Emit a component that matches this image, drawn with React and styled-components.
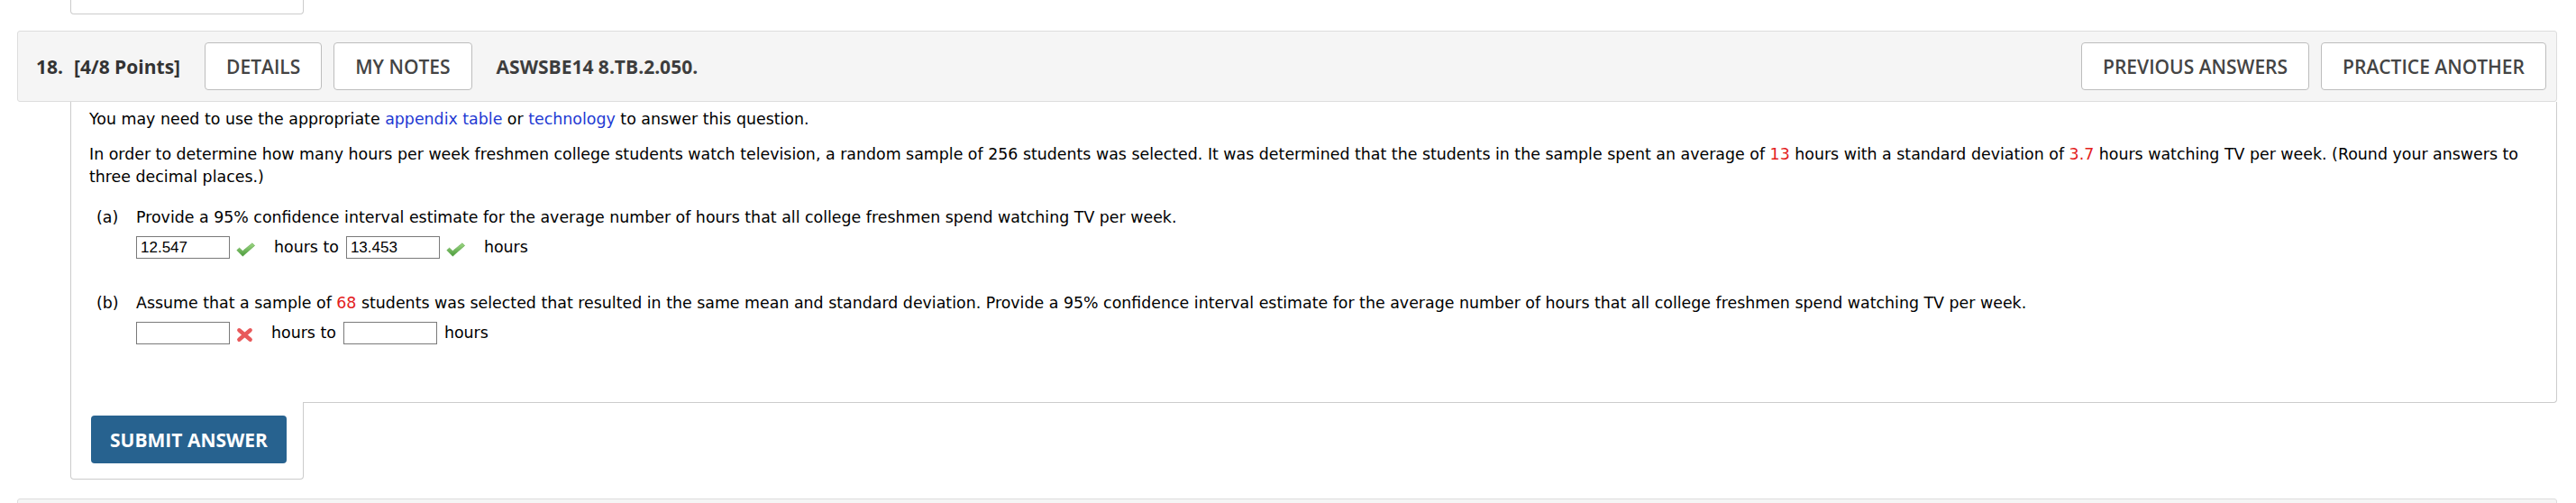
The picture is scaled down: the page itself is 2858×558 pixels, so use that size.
import React from "react";
import styled, { createGlobalStyle } from "styled-components";

const GlobalStyle = createGlobalStyle`
  html, body { margin: 0; padding: 0; background: #fff; }
  body { font-family: Verdana, "DejaVu Sans", sans-serif; color: #000; }
`;

const Page = styled.div`
  width: 2858px;
  height: 558px;
  overflow: hidden;
  box-sizing: border-box;
  padding: 0 21px 0 19px;
`;

const Tab = styled.div`
  margin-left: 59px;
  width: 259px;
  height: ${(p) => p.$h}px;
  margin-top: ${(p) => p.$mt || 0}px;
  box-sizing: border-box;
  background: #fff;
  border: 1px solid #ccc;
  border-top: none;
  border-radius: 0 0 4px 4px;
  padding: 15px 0 0 22px;
  position: relative;
`;

const Header = styled.div`
  display: flex;
  align-items: center;
  box-sizing: border-box;
  height: 79px;
  margin-top: ${(p) => p.$mt}px;
  padding: 0 11px 0 20px;
  background: #f5f5f5;
  border: 1px solid #ddd;
  border-radius: 3px;
  font-family: "Open Sans", sans-serif;
  font-size: 21px;
  color: #333;
`;

const QNum = styled.span`
  font-weight: 700;
  margin-right: 12px;
`;

const Points = styled.span`
  font-weight: 700;
  margin-right: 27px;
`;

const Code = styled.span`
  font-weight: 700;
  color: #3d3d3d;
  margin-left: 27px;
`;

const ButtonGroup = styled.div`
  display: flex;
  gap: 13px;
  margin-left: ${(p) => (p.$push ? "auto" : "0")};
`;

const HeaderButton = styled.button`
  height: 53px;
  padding: 0 23px;
  box-sizing: border-box;
  background: #fff;
  border: 1px solid #bdbdbd;
  border-radius: 4px;
  font-family: "Open Sans", sans-serif;
  font-weight: 600;
  font-size: 21px;
  color: #444;
  cursor: pointer;
`;

const Panel = styled.div`
  margin-left: 59px;
  height: 334px;
  box-sizing: border-box;
  border: 1px solid #ccc;
  border-top: none;
  border-radius: 0 0 4px 0;
  padding: 7px 20px 0 20px;
  font-size: 17.4px;
  line-height: 25px;
`;

const Para = styled.p`
  margin: ${(p) => p.$mt || 0}px 0 0 0;
`;

const Link = styled.a`
  color: #2239d3;
  text-decoration: none;
`;

const Red = styled.span`
  color: #e3211c;
`;

const Part = styled.div`
  display: grid;
  grid-template-columns: 44px 1fr;
  padding-left: 8px;
  margin-top: ${(p) => p.$mt}px;
`;

const PartLabel = styled.span``;

const PartBody = styled.div`
  display: flex;
  flex-direction: column;
`;

const AnswerRow = styled.div`
  display: flex;
  align-items: center;
  height: 25px;
  margin-top: 8px;
`;

const AnswerInput = styled.input`
  width: 104px;
  height: 25px;
  box-sizing: border-box;
  border: 1px solid #7a7a7a;
  border-radius: 0;
  padding: 0 4px;
  margin: 0;
  font-family: Arial, "Liberation Sans", sans-serif;
  font-size: 17px;
  color: #000;
  background: #fff;
  outline: none;
`;

const Mark = styled.span`
  display: inline-flex;
  width: ${(p) => p.$w}px;
  margin: 4px 20px 0 7px;
`;

const RowText = styled.span`
  margin-left: ${(p) => p.$ml || 0}px;
  margin-right: ${(p) => p.$mr || 0}px;
  white-space: nowrap;
`;

const SubmitButton = styled.button`
  width: 217px;
  height: 53px;
  background: #27628f;
  color: #fff;
  border: none;
  border-radius: 4px;
  font-family: "Open Sans", sans-serif;
  font-weight: 700;
  font-size: 21px;
  cursor: pointer;
`;

const CheckIcon = () => (
  <svg width="21" height="16" viewBox="0 0 21 16">
    <defs>
      <linearGradient id="chk" x1="0" y1="0" x2="0" y2="1">
        <stop offset="0" stopColor="#9fd884" />
        <stop offset="1" stopColor="#4b9a3c" />
      </linearGradient>
    </defs>
    <path
      d="M0.8 8.6 L3.6 6.1 L7.2 9.4 L17.9 0.8 L20.6 3.4 L7.3 15.2 Z"
      fill="url(#chk)"
      stroke="#5aa648"
      strokeWidth="0.6"
      strokeLinejoin="round"
    />
  </svg>
);

const CrossIcon = () => (
  <svg width="20" height="17" viewBox="0 0 20 17">
    <g stroke="#e8595b" strokeWidth="4.6" strokeLinecap="round">
      <line x1="3.5" y1="3" x2="16.5" y2="14" />
      <line x1="16.5" y1="3" x2="3.5" y2="14" />
    </g>
  </svg>
);

export default function App() {
  return (
    <>
      <GlobalStyle />
      <Page>
        <Tab $h={11} />
        <Header $mt={18}>
          <QNum>18.</QNum>
          <Points>[4/8 Points]</Points>
          <ButtonGroup>
            <HeaderButton>DETAILS</HeaderButton>
            <HeaderButton>MY NOTES</HeaderButton>
          </ButtonGroup>
          <Code>ASWSBE14 8.TB.2.050.</Code>
          <ButtonGroup $push>
            <HeaderButton>PREVIOUS ANSWERS</HeaderButton>
            <HeaderButton>PRACTICE ANOTHER</HeaderButton>
          </ButtonGroup>
        </Header>
        <Panel>
          <Para>
            You may need to use the appropriate <Link href="#">appendix table</Link> or{" "}
            <Link href="#">technology</Link> to answer this question.
          </Para>
          <Para $mt={14}>
            In order to determine how many hours per week freshmen college students watch television, a random
            sample of 256 students was selected. It was determined that the students in the sample spent an
            average of <Red>13</Red> hours with a standard deviation of <Red>3.7</Red>
            {" hours watching TV per week. (Round your answers to "}
            {"three decimal places.)"}
          </Para>
          <Part $mt={20}>
            <PartLabel>(a)</PartLabel>
            <PartBody>
              <span>
                Provide a 95% confidence interval estimate for the average number of hours that all college
                freshmen spend watching TV per week.
              </span>
              <AnswerRow>
                <AnswerInput readOnly value="12.547" />
                <Mark $w={22}>
                  <CheckIcon />
                </Mark>
                <RowText $mr={8}>hours to</RowText>
                <AnswerInput readOnly value="13.453" />
                <Mark $w={22}>
                  <CheckIcon />
                </Mark>
                <RowText>hours</RowText>
              </AnswerRow>
            </PartBody>
          </Part>
          <Part $mt={37}>
            <PartLabel>(b)</PartLabel>
            <PartBody>
              <span>
                Assume that a sample of <Red>68</Red> students was selected that resulted in the same mean and
                standard deviation. Provide a 95% confidence interval estimate for the average number of hours
                that all college freshmen spend watching TV per week.
              </span>
              <AnswerRow>
                <AnswerInput readOnly value="" />
                <Mark $w={19}>
                  <CrossIcon />
                </Mark>
                <RowText $mr={8}>hours to</RowText>
                <AnswerInput readOnly value="" />
                <RowText $ml={8}>hours</RowText>
              </AnswerRow>
            </PartBody>
          </Part>
        </Panel>
        <Tab $h={86} $mt={-1}>
          <SubmitButton>SUBMIT ANSWER</SubmitButton>
        </Tab>
        <Header $mt={21} />
      </Page>
    </>
  );
}
